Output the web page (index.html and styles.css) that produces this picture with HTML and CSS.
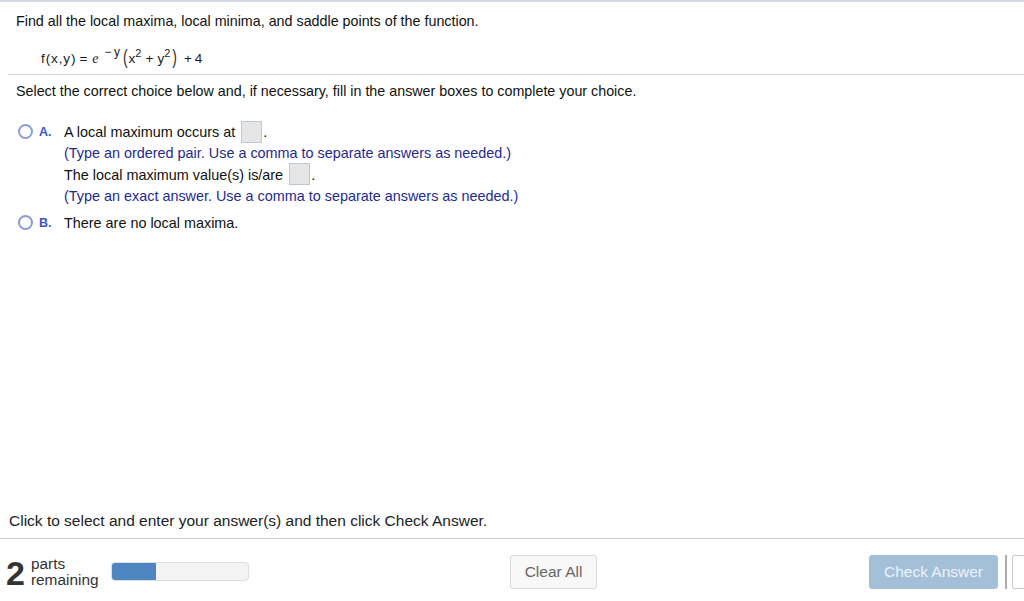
FILE: index.html
```html
<!DOCTYPE html>
<html>
<head>
<meta charset="utf-8">
<link rel="stylesheet" href="styles.css">
</head>
<body>
<div class="page">
  <div class="question">
    <p class="prompt">Find all the local maxima, local minima, and saddle points of the function.</p>
    <div class="formula">
      <span class="fn">f(x,y)</span><span class="eq">=</span><span class="e">e</span><span class="exp">−&#8201;y</span><span class="paren">(</span><span class="var">x</span><sup>2</sup><span class="op">+</span><span class="var vy">y</span><sup>2</sup><span class="paren rp">)</span><span class="op plus">+</span><span class="num">4</span>
    </div>
  </div>
  <div class="answer-area">
    <p class="instructions">Select the correct choice below and, if necessary, fill in the answer boxes to complete your choice.</p>
    <div class="choice">
      <span class="radio"></span>
      <span class="letter">A.</span>
      <div class="choice-body">
        <div class="line">A local maximum occurs at <span class="box"></span>.</div>
        <div class="line hint">(Type an ordered pair. Use a comma to separate answers as needed.)</div>
        <div class="line">The local maximum value(s) is/are <span class="box"></span>.</div>
        <div class="line hint">(Type an exact answer. Use a comma to separate answers as needed.)</div>
      </div>
    </div>
    <div class="choice choice-b">
      <span class="radio"></span>
      <span class="letter">B.</span>
      <div class="choice-body">
        <div class="line">There are no local maxima.</div>
      </div>
    </div>
  </div>
  <p class="status">Click to select and enter your answer(s) and then click Check Answer.</p>
  <div class="footer">
    <div class="parts">
      <span class="count">2</span>
      <span class="parts-label">parts<br>remaining</span>
      <div class="progress"><div class="progress-fill" style="width:33%"></div></div>
    </div>
    <button class="btn btn-clear">Clear All</button>
    <div class="right-buttons">
      <button class="btn btn-check">Check Answer</button>
      <span class="divider"></span>
      <span class="btn-stub"></span>
    </div>
  </div>
</div>
</body>
</html>
```
FILE: styles.css
```css
* { box-sizing: border-box; }
html, body { margin: 0; padding: 0; }
body {
  font-family: "Liberation Sans", Arial, sans-serif;
  color: #111;
  background: #fff;
  width: 1024px;
  height: 601px;
  overflow: hidden;
}
.page {
  height: 601px;
  display: flex;
  flex-direction: column;
  border-top: 2px solid #d6dae2;
}
.question {
  padding: 0 0 0 16px;
}
.prompt {
  margin: 11px 0 0 0;
  font-size: 14.3px;
  line-height: 17px;
}
.formula {
  margin: 17px 0 0 25px;
  height: 27px;
  display: flex;
  align-items: baseline;
  font-size: 13.5px;
  padding-top: 4px;
  color: #1a1a1a;
}
.fn { letter-spacing: 0.9px; }
.eq { margin-left: 3px; }
.e {
  font-family: "Liberation Serif", serif;
  font-style: italic;
  font-size: 14px;
  margin-left: 5px;
}
.exp {
  position: relative;
  top: -7px;
  font-size: 12px;
  margin-left: 6px;
}
.paren {
  display: inline-block;
  font-size: 14px;
  line-height: 12px;
  color: #333;
  transform: scale(1, 1.5);
  transform-origin: 50% 70%;
  margin-left: 3px;
}
.rp { margin-left: 2px; }
.var { margin-left: 1px; }
.vy { margin-left: 4px; }
.formula sup { font-size: 11px; line-height: 0; position: relative; top: -6px; vertical-align: baseline; }
.op { margin-left: 4px; }
.plus { margin-left: 7px; }
.num { margin-left: 3px; }
.answer-area {
  border-top: 1px solid #d3d6dc;
  margin-left: 8px;
  padding-left: 8px;
  flex: 1;
}
.instructions {
  margin: 8px 0 0 0;
  font-size: 14.3px;
  line-height: 17px;
}
.choice {
  display: flex;
  align-items: flex-start;
  margin-top: 25px;
}
.choice-b { margin-top: 9px; }
.radio {
  width: 15px;
  height: 15px;
  border: 2px solid #8a9bdc;
  border-radius: 50%;
  margin: -1px 0 0 2px;
  flex: none;
}
.letter {
  color: #3a56c4;
  font-weight: bold;
  font-size: 12.5px;
  width: 25px;
  margin-left: 6px;
  line-height: 16px;
  margin-top: -1px;
}
.choice-body { font-size: 14.4px; }
.line {
  line-height: 21.3px;
  height: 21.3px;
}
.choice-body .line:first-child { margin-top: -3px; }
.hint { color: #1f2a8e; }
.box {
  display: inline-block;
  width: 21px;
  height: 22px;
  background: #e6e6e6;
  border: 1px solid #b7c9da;
  vertical-align: middle;
  margin: -3px 1px 0 2px;
}
.status {
  margin: 0;
  padding: 0 0 8px 9px;
  font-size: 15.5px;
  line-height: 18px;
  color: #222;
  border-bottom: 1px solid #c9cdd6;
}
.footer {
  height: 62px;
  display: flex;
  align-items: flex-start;
  padding-top: 16px;
}
.parts {
  display: flex;
  align-items: center;
  width: 510px;
  padding-left: 6px;
}
.count {
  font-size: 34px;
  font-weight: bold;
  color: #333;
  line-height: 30px;
  margin-top: 3px;
}
.parts-label {
  font-size: 15.4px;
  line-height: 16px;
  color: #333;
  margin-left: 6px;
}
.progress {
  width: 138px;
  height: 19px;
  background: #f3f3f3;
  border: 1px solid #dedede;
  border-radius: 4px;
  margin-left: 12px;
  overflow: hidden;
}
.progress-fill {
  height: 100%;
  background: #4e86c2;
}
.btn {
  font-family: "Liberation Sans", Arial, sans-serif;
  font-size: 15.5px;
  height: 34px;
  border-radius: 3px;
  cursor: pointer;
}
.btn-clear {
  width: 87px;
  background: #f8f8f8;
  border: 1px solid #d8d8d8;
  color: #666;
}
.right-buttons {
  margin-left: auto;
  display: flex;
  align-items: center;
}
.btn-check {
  width: 129px;
  background: #a4c0d9;
  border: 1px solid #a4c0d9;
  color: #eef3f8;
}
.divider {
  width: 2px;
  height: 34px;
  background: #aaa;
  margin-left: 7px;
}
.btn-stub {
  width: 12px;
  height: 34px;
  border: 1px solid #ccc;
  border-right: none;
  border-radius: 3px 0 0 3px;
  margin-left: 5px;
}
```
